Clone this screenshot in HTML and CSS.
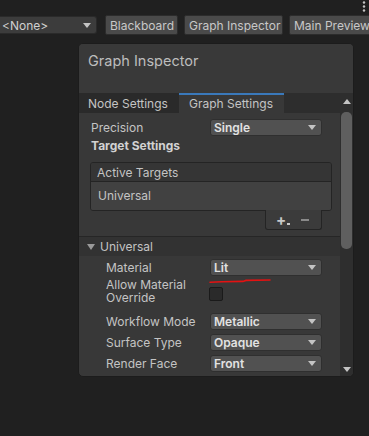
FILE: index.html
```html
<!DOCTYPE html>
<html lang="en">
<head>
    <meta charset="UTF-8">
    <meta name="viewport" content="width=device-width, initial-scale=1.0">
    <title>Shader Graph - Graph Inspector</title>
    <link rel="stylesheet" href="styles.css">
</head>
<body>
    <div class="top-strip">
        <svg class="more-icon" width="4" height="11" viewBox="0 0 4 11">
            <circle cx="2" cy="1.5" r="1.2" fill="#c4c4c4"/>
            <circle cx="2" cy="5.5" r="1.2" fill="#c4c4c4"/>
            <circle cx="2" cy="9.5" r="1.2" fill="#c4c4c4"/>
        </svg>
    </div>

    <div class="toolbar">
        <div class="tool-dropdown">
            <span>&lt;None&gt;</span>
            <span class="arrow"></span>
        </div>
        <button class="tool-btn btn-blackboard">Blackboard</button>
        <button class="tool-btn btn-inspector">Graph Inspector</button>
        <button class="tool-btn btn-preview">Main Preview</button>
    </div>

    <div class="inspector">
        <div class="inspector-header">Graph Inspector</div>
        <div class="inspector-body">
            <div class="inspector-main">
                <div class="tabs">
                    <div class="tab">Node Settings</div>
                    <div class="tab active">Graph Settings</div>
                </div>
                <div class="content">
                    <div class="row">
                        <span class="label">Precision</span>
                        <div class="field-dropdown"><span>Single</span><span class="arrow"></span></div>
                    </div>
                    <div class="row">
                        <span class="label bold">Target Settings</span>
                    </div>

                    <div class="target-list">
                        <div class="list-head">Active Targets</div>
                        <div class="list-body">Universal</div>
                    </div>
                    <div class="list-footer-wrap">
                        <div class="list-footer">
                            <span class="plus">+<i></i></span>
                            <span class="minus"></span>
                        </div>
                    </div>

                    <div class="foldout">
                        <span class="fold-arrow"></span>
                        <span>Universal</span>
                    </div>

                    <div class="row sub">
                        <span class="label">Material</span>
                        <div class="field-dropdown"><span>Lit</span><span class="arrow"></span></div>
                        <svg class="mark" width="64" height="6" viewBox="0 0 64 6">
                            <path d="M1 4.2 L13 3.8 L34 3.4 L37 2.4 L61 2" stroke="#e31212" stroke-width="1.6" fill="none" stroke-linecap="round"/>
                        </svg>
                    </div>
                    <div class="row sub tall">
                        <span class="label">Allow Material Override</span>
                        <span class="checkbox"></span>
                    </div>
                    <div class="row sub">
                        <span class="label">Workflow Mode</span>
                        <div class="field-dropdown"><span>Metallic</span><span class="arrow"></span></div>
                    </div>
                    <div class="row sub">
                        <span class="label">Surface Type</span>
                        <div class="field-dropdown"><span>Opaque</span><span class="arrow"></span></div>
                    </div>
                    <div class="row sub">
                        <span class="label">Render Face</span>
                        <div class="field-dropdown"><span>Front</span><span class="arrow"></span></div>
                    </div>
                    <div class="row sub">
                        <span class="label"></span>
                        <div class="field-dropdown"></div>
                    </div>
                </div>
            </div>
            <div class="scrollbar">
                <span class="scroll-up"></span>
                <div class="scroll-track">
                    <div class="scroll-thumb"></div>
                </div>
                <span class="scroll-down"></span>
            </div>
        </div>
    </div>
</body>
</html>
```

FILE: styles.css
```css
* {
    box-sizing: border-box;
}

body {
    margin: 0;
    padding: 0;
    width: 369px;
    height: 436px;
    overflow: hidden;
    background-color: #202020;
    font-family: Inter, "Noto Sans", sans-serif;
    font-size: 12px;
    color: #c4c4c4;
}

.top-strip {
    height: 14px;
    display: flex;
    justify-content: flex-end;
    padding: 1px 3px 0 0;
}

.toolbar {
    display: flex;
    align-items: center;
    height: 22px;
    overflow: hidden;
}

.tool-dropdown {
    flex-shrink: 0;
    width: 97px;
    height: 18px;
    display: flex;
    align-items: center;
    justify-content: space-between;
    padding: 0 5px 0 2px;
    background-color: #3c3c3c;
    border: 1px solid #2a2a2a;
    border-left: none;
    border-radius: 0 3px 3px 0;
    color: #d0d0d0;
}

.arrow {
    width: 0;
    height: 0;
    border-left: 4px solid transparent;
    border-right: 4px solid transparent;
    border-top: 5px solid #c4c4c4;
}

.tool-btn {
    flex-shrink: 0;
    height: 20px;
    padding: 0 4px;
    background-color: #4a4a4a;
    border: 1px solid #2c2c2c;
    border-radius: 2px;
    font-family: inherit;
    font-size: 12px;
    color: #c8c8c8;
    white-space: nowrap;
}

.btn-blackboard {
    margin-left: 8px;
    width: 73px;
}

.btn-inspector {
    margin-left: 6px;
    width: 99px;
}

.btn-preview {
    margin-left: 6px;
    width: 90px;
    text-align: left;
}

.inspector {
    margin: 7px 0 0 78px;
    width: 276px;
    height: 334px;
    background-color: #383838;
    border: 1px solid #1c1c1c;
    border-radius: 5px;
    overflow: hidden;
    display: flex;
    flex-direction: column;
}

.inspector-header {
    height: 49px;
    padding: 8px 0 0 9px;
    font-size: 14.5px;
    color: #bdbdbd;
    background-color: #393939;
}

.inspector-body {
    flex: 1;
    display: flex;
    min-height: 0;
}

.inspector-main {
    flex: 1;
    display: flex;
    flex-direction: column;
    min-width: 0;
}

.tabs {
    display: flex;
    height: 20px;
    background-color: #2d2d2d;
}

.tab {
    width: 100px;
    padding: 3px 0 0 9px;
    background-color: #2a2a2a;
    color: #c4c4c4;
}

.tab.active {
    width: 105px;
    padding-left: 10px;
    background-color: #383838;
    border-top: 2px solid #3a79bb;
    padding-top: 1px;
}

.content {
    flex: 1;
    overflow: hidden;
    padding-top: 5px;
}

.row {
    position: relative;
    display: flex;
    align-items: center;
    height: 18px;
    padding-left: 12px;
}

.row.sub {
    padding-left: 27px;
    margin-bottom: 3px;
}

.row.tall {
    height: 27px;
    margin-top: -1px;
    margin-bottom: 7px;
    align-items: flex-start;
}

.label {
    width: 119px;
    flex-shrink: 0;
    color: #c4c4c4;
    line-height: 13px;
}

.row.sub .label {
    width: 104px;
}

.label.bold {
    font-weight: 700;
    color: #d2d2d2;
}

.field-dropdown {
    width: 112px;
    height: 17px;
    display: flex;
    align-items: center;
    justify-content: space-between;
    padding: 0 5px 0 3px;
    background-color: #515151;
    border: 1px solid #2f2f2f;
    border-radius: 3px;
    font-weight: 600;
    color: #e2e2e2;
}

.checkbox {
    width: 14px;
    height: 14px;
    margin: 9px 0 0 -1px;
    background-color: #2a2a2a;
    border: 1px solid #1a1a1a;
    border-radius: 2px;
}

.mark {
    position: absolute;
    left: 130px;
    top: 20px;
}

.target-list {
    margin: 8px 0 0 11px;
    width: 242px;
    border: 1px solid #242424;
    border-radius: 3px;
    overflow: hidden;
}

.list-head {
    height: 19px;
    padding: 2px 0 0 6px;
    background-color: #353535;
    border-bottom: 1px solid #242424;
    color: #c4c4c4;
}

.list-body {
    height: 28px;
    padding: 6px 0 0 7px;
    background-color: #414141;
    color: #c4c4c4;
}

.list-footer-wrap {
    display: flex;
    padding-left: 186px;
}

.list-footer {
    width: 57px;
    height: 20px;
    margin-top: -1px;
    display: flex;
    align-items: center;
    gap: 15px;
    padding-left: 10px;
    background-color: #3b3b3b;
    border: 1px solid #242424;
    border-top: none;
    border-radius: 0 0 3px 3px;
    font-size: 15px;
    font-weight: 700;
    color: #c8c8c8;
}

.plus {
    position: relative;
    line-height: 1;
}

.plus i {
    position: absolute;
    right: -4px;
    bottom: 2px;
    width: 3px;
    height: 2px;
    background-color: #c8c8c8;
}

.minus {
    width: 8px;
    height: 2px;
    background-color: #8a8a8a;
}

.foldout {
    display: flex;
    align-items: center;
    gap: 5px;
    height: 20px;
    margin-top: 6px;
    margin-bottom: 2px;
    padding-left: 8px;
    background-color: #323232;
    border-top: 1px solid #262626;
    color: #c4c4c4;
}

.fold-arrow {
    width: 0;
    height: 0;
    border-left: 4.5px solid transparent;
    border-right: 4.5px solid transparent;
    border-top: 6px solid #999;
}

.scrollbar {
    width: 13px;
    display: flex;
    flex-direction: column;
    align-items: center;
    background-color: #2e2e2e;
    padding: 6px 0 4px;
}

.scroll-up {
    width: 0;
    height: 0;
    border-left: 4px solid transparent;
    border-right: 4px solid transparent;
    border-bottom: 5px solid #c4c4c4;
}

.scroll-down {
    width: 0;
    height: 0;
    border-left: 4px solid transparent;
    border-right: 4px solid transparent;
    border-top: 5px solid #c4c4c4;
}

.scroll-track {
    flex: 1;
    width: 100%;
    padding: 8px 1px 0;
}

.scroll-thumb {
    height: 137px;
    background-color: #5f5f5f;
    border-radius: 5px;
}
```
